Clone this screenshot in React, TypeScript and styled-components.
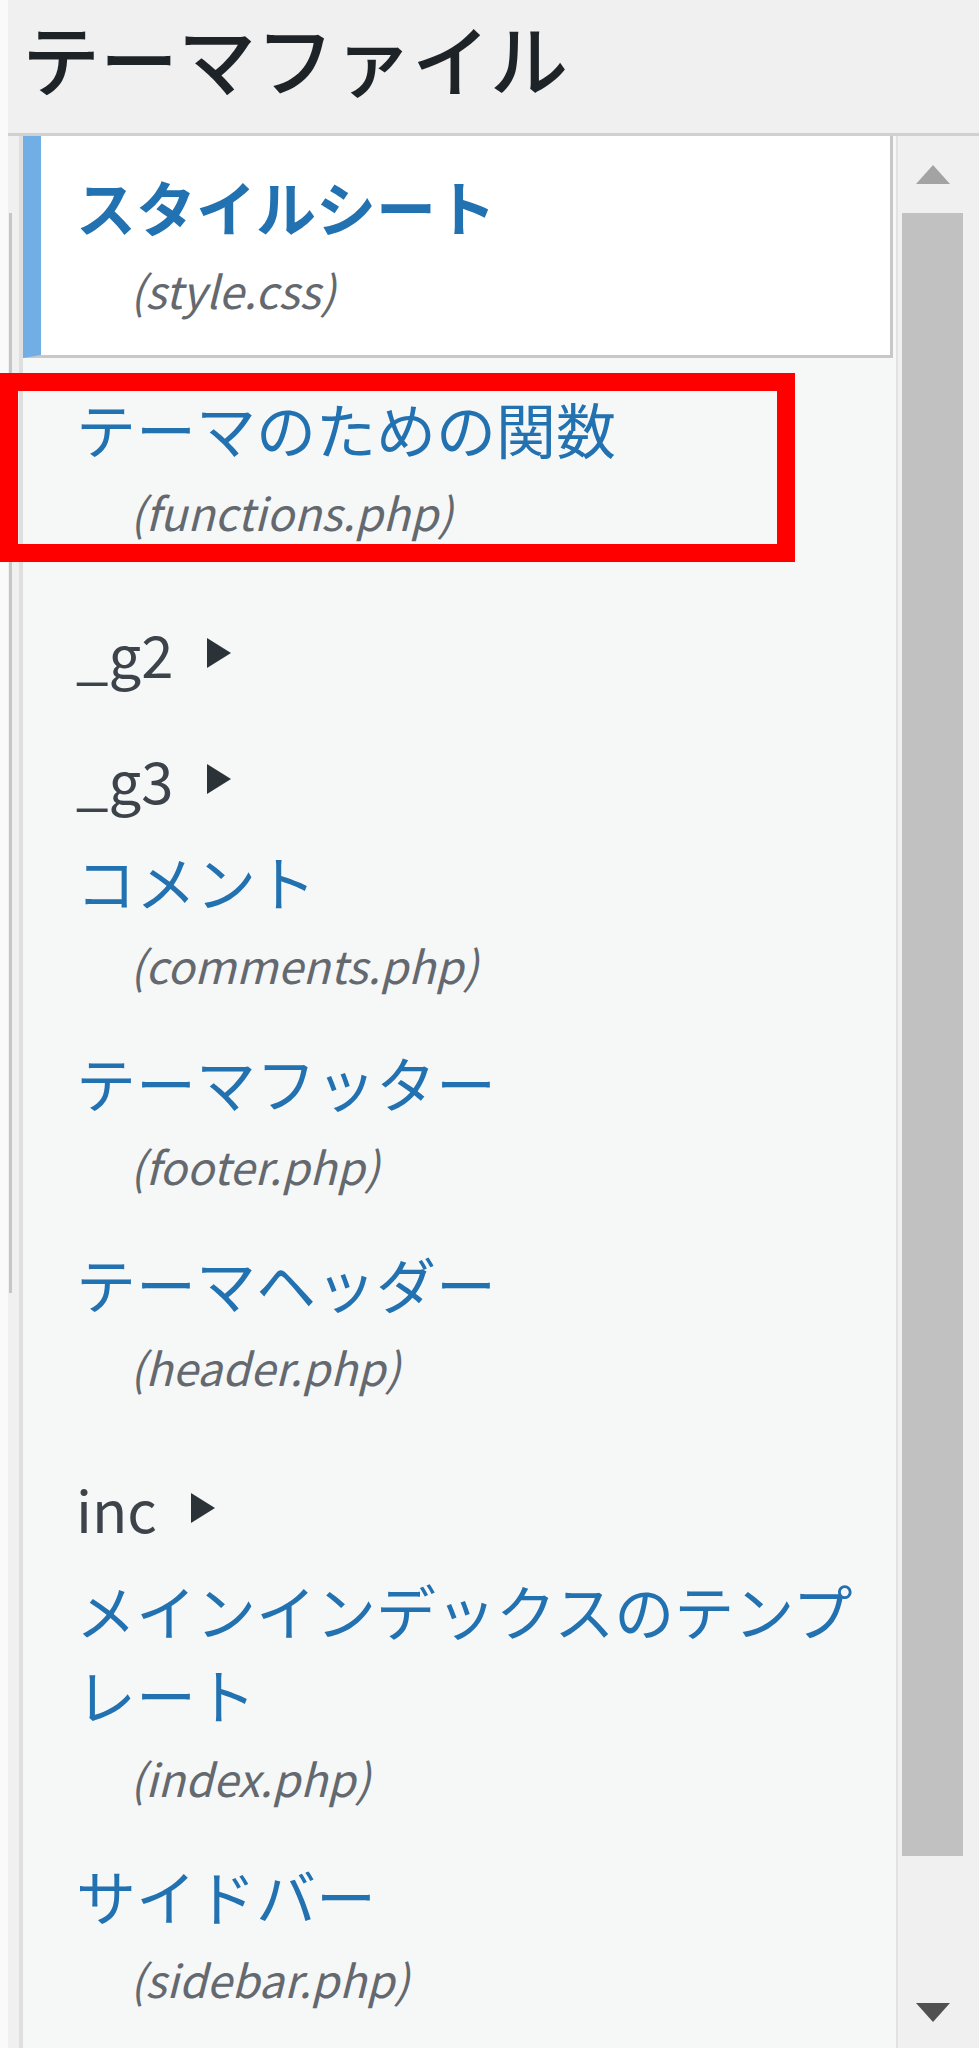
import React from "react";
import styled, { createGlobalStyle } from "styled-components";

type Entry =
  | { kind: "file"; name: string; file: string; current?: boolean }
  | { kind: "folder"; name: string };

const entries: Entry[] = [
  { kind: "file", name: "スタイルシート", file: "(style.css)", current: true },
  { kind: "file", name: "テーマのための関数", file: "(functions.php)" },
  { kind: "folder", name: "_g2" },
  { kind: "folder", name: "_g3" },
  { kind: "file", name: "コメント", file: "(comments.php)" },
  { kind: "file", name: "テーマフッター", file: "(footer.php)" },
  { kind: "file", name: "テーマヘッダー", file: "(header.php)" },
  { kind: "folder", name: "inc" },
  { kind: "file", name: "メインインデックスのテンプレート", file: "(index.php)" },
  { kind: "file", name: "サイドバー", file: "(sidebar.php)" },
];

export default function App() {
  return (
    <>
      <GlobalStyle />
      <Page>
        <Gutter />
        <Main>
          <Header>
            <Title>テーマファイル</Title>
          </Header>
          <Body>
            <FileList>
              {entries.map((entry) =>
                entry.kind === "file" ? (
                  <FileItem key={entry.name} $current={entry.current}>
                    <Name $current={entry.current}>{entry.name}</Name>
                    <FileName>{entry.file}</FileName>
                  </FileItem>
                ) : (
                  <FolderItem key={entry.name}>
                    <FolderLabel>{entry.name}</FolderLabel>
                    <Caret />
                  </FolderItem>
                )
              )}
            </FileList>
            <Scrollbar>
              <ScrollButton $height={77}>
                <Arrow $up $color="#a3a3a3" />
              </ScrollButton>
              <Thumb />
              <ScrollButton $height={72}>
                <Arrow $color="#505050" />
              </ScrollButton>
            </Scrollbar>
          </Body>
        </Main>
        {/* 注目枠 */}
        <Highlight />
      </Page>
    </>
  );
}

const GlobalStyle = createGlobalStyle`
  html, body {
    margin: 0;
    padding: 0;
    background: #fafafa;
  }
  body {
    font-family: "Noto Sans CJK JP", "Noto Sans", sans-serif;
  }
`;

const Page = styled.div`
  position: relative;
  display: flex;
  height: 2048px;
  overflow: hidden;
`;

const Gutter = styled.div`
  width: 8px;
  flex-shrink: 0;
  background: #fafafa;
`;

const Main = styled.div`
  flex: 1;
  display: flex;
  flex-direction: column;
  background: #f0f0f1;
`;

const Header = styled.header`
  box-sizing: border-box;
  height: 136px;
  padding: 2px 0 0 14px;
  border-bottom: 3px solid #d0d0d0;
`;

const Title = styled.h2`
  margin: 0;
  font-size: 78px;
  line-height: 110px;
  font-weight: 500;
  color: #1d2327;
`;

const Body = styled.div`
  position: relative;
  flex: 1;
  display: flex;
  padding-left: 11px;

  &::before {
    content: "";
    position: absolute;
    left: 1px;
    top: 77px;
    width: 3px;
    height: 1080px;
    background: #c6c6c6;
  }
`;

const FileList = styled.ul`
  flex: 1;
  display: flex;
  flex-direction: column;
  margin: 0;
  padding: 0;
  list-style: none;
  background: #f6f7f7;
  border-left: 4px solid #dfdfdf;
`;

const FileItem = styled.li<{ $current?: boolean }>`
  padding: ${(p) => (p.$current ? "28px 0 23px 35px" : "16px 0 17px 53px")};
  ${(p) =>
    p.$current &&
    `
    margin: 0 3px 12px 0;
    background: #fff;
    border-left: 18px solid #72aee6;
    border-right: 3px solid #c8c8c8;
    border-bottom: 3px solid #c8c8c8;
  `}
`;

const Name = styled.span<{ $current?: boolean }>`
  display: block;
  font-size: 60px;
  line-height: 84px;
  font-weight: ${(p) => (p.$current ? 700 : 400)};
  color: #2271b1;
`;

const FileName = styled.span`
  display: block;
  padding-left: 54px;
  font-size: 45px;
  line-height: 84px;
  font-style: italic;
  color: #646970;
`;

const FolderItem = styled.li`
  display: flex;
  align-items: center;
  gap: 34px;
  padding: 40px 0 2px 53px;
`;

const FolderLabel = styled.span`
  font-size: 58px;
  line-height: 84px;
  color: #3c434a;
`;

const Caret = styled.span`
  width: 0;
  height: 0;
  border-left: 24px solid #2c3338;
  border-top: 15px solid transparent;
  border-bottom: 15px solid transparent;
`;

const Scrollbar = styled.div`
  width: 77px;
  flex-shrink: 0;
  display: flex;
  flex-direction: column;
  padding-left: 4px;
  background: #f0f0f0;
  border-left: 2px solid #e2e2e2;
`;

const ScrollButton = styled.div<{ $height: number }>`
  height: ${(p) => p.$height}px;
  display: flex;
  align-items: center;
  padding-left: 14px;
  &:last-child {
    margin-top: auto;
  }
`;

const Arrow = styled.span<{ $up?: boolean; $color: string }>`
  width: 0;
  height: 0;
  border-left: 17px solid transparent;
  border-right: 17px solid transparent;
  ${(p) =>
    p.$up
      ? `border-bottom: 19px solid ${p.$color};`
      : `border-top: 19px solid ${p.$color};`}
`;

const Thumb = styled.div`
  width: 61px;
  height: 1643px;
  background: #c1c1c1;
`;

const Highlight = styled.div`
  position: absolute;
  left: 0;
  top: 373px;
  box-sizing: border-box;
  width: 795px;
  height: 189px;
  border: 18px solid #ff0000;
  pointer-events: none;
`;
